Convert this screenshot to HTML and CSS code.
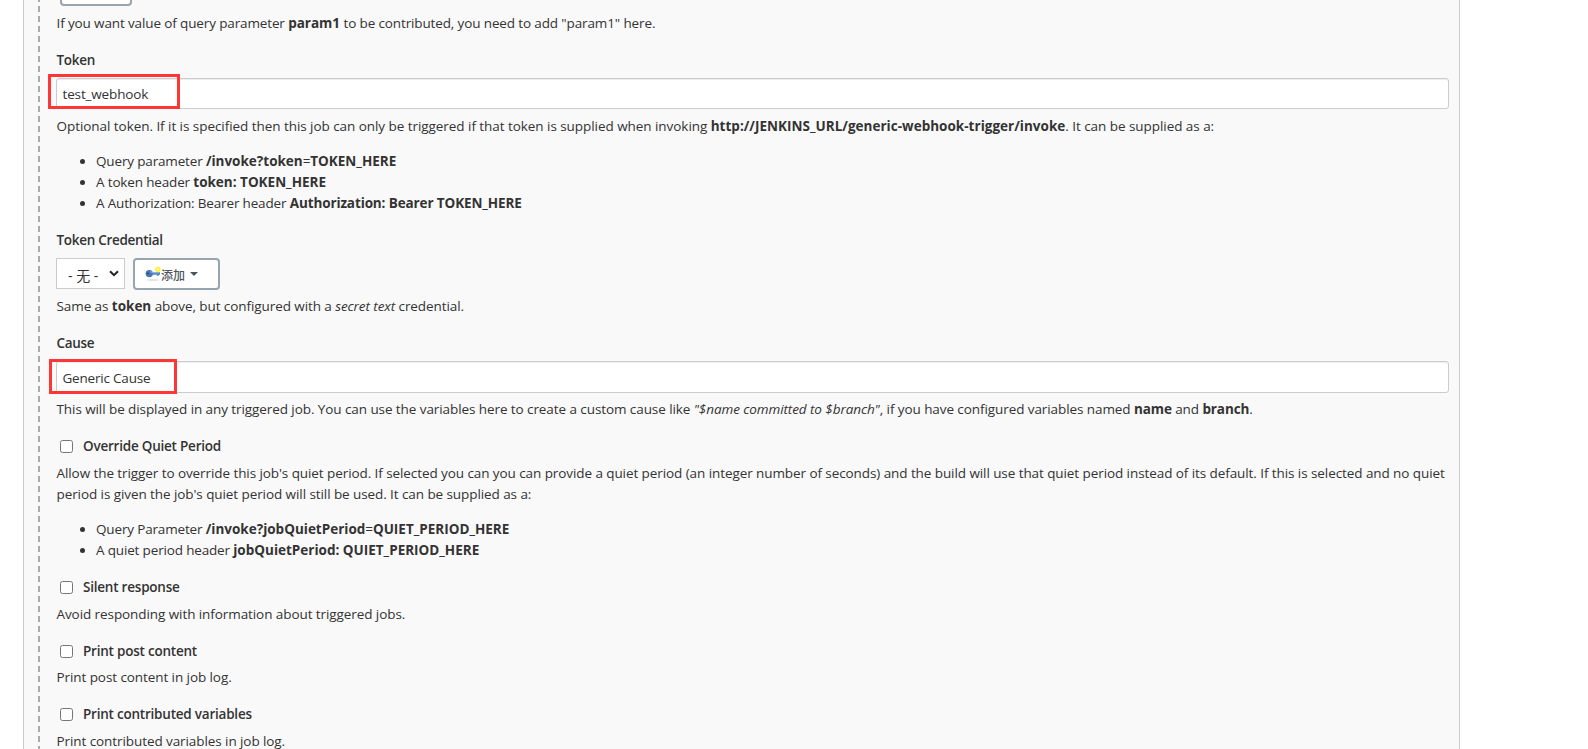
FILE: index.html
```html
<!DOCTYPE html>
<html lang="zh-CN">
<head>
    <meta charset="UTF-8">
    <meta name="viewport" content="width=device-width, initial-scale=1.0">
    <title>Generic Webhook Trigger</title>
    <link rel="stylesheet" href="styles.css">
</head>
<body>

    <form class="config-panel">
        <div class="nested">
            <button type="button" class="btn btn-cut" aria-label="add"></button>
            <div class="help help-param">If you want value of query parameter <b>param1</b> to be contributed, you need to add "param1" here.</div>

            <label class="title" for="token">Token</label>
            <div class="field">
                <input type="text" id="token" class="text-input" value="test_webhook">
                <span class="mark mark-token"></span>
            </div>
            <div class="help help-token">Optional token. If it is specified then this job can only be triggered if that token is supplied when invoking <b>http://JENKINS_URL/generic-webhook-trigger/invoke</b>. It can be supplied as a:</div>
            <ul>
                <li>Query parameter <b>/invoke?token</b>=<b>TOKEN_HERE</b></li>
                <li>A token header <b>token: TOKEN_HERE</b></li>
                <li>A Authorization: Bearer header <b class="tight">Authorization: Bearer TOKEN_HERE</b></li>
            </ul>

            <label class="title">Token Credential</label>
            <div class="credential-row">
                <div class="select">
                    <span>- 无 -</span>
                    <svg width="10" height="7" viewBox="0 0 10 7"><path d="M1 1.2L5 5.2L9 1.2" fill="none" stroke="#222" stroke-width="2"/></svg>
                </div>
                <button type="button" class="btn btn-add">
                    <svg class="key" width="16" height="16" viewBox="0 0 16 16">
                        <ellipse cx="8" cy="14" rx="6" ry="1" fill="#e4e4e4"/>
                        <path d="M7 6.2h8v2.6h-1.2v1h-2v-1H7z" fill="#5583bd"/>
                        <circle cx="4.3" cy="7.6" r="3.7" fill="#4a77b4"/>
                        <circle cx="3" cy="7.4" r="1" fill="#24466f"/>
                        <path d="M5 5.6l3 1.2h6" fill="none" stroke="#9bbbe0" stroke-width=".8"/>
                        <circle cx="12.8" cy="3.3" r="2.8" fill="#fff33d"/>
                        <circle cx="12.8" cy="3.3" r="1" fill="#fffbc0"/>
                    </svg>
                    <span>添加</span>
                    <svg class="caret" width="8" height="4" viewBox="0 0 8 4"><path d="M0 0h8L4 4z" fill="#4d545d"/></svg>
                </button>
            </div>
            <div class="help">Same as <b>token</b> above, but configured with a <i>secret text</i> credential.</div>

            <label class="title" for="cause">Cause</label>
            <div class="field field-cause">
                <input type="text" id="cause" class="text-input tall" value="Generic Cause">
                <span class="mark mark-cause"></span>
            </div>
            <div class="help">This will be displayed in any triggered job. You can use the variables here to create a custom cause like <i>"$name committed to $branch"</i>, if you have configured variables named <b class="tight">name</b> and <b class="tight">branch</b>.</div>

            <label class="check"><input type="checkbox">Override Quiet Period</label>
            <div class="help">Allow the trigger to override this job's quiet period. If selected you can you can provide a quiet period (an integer number of seconds) and the build will use that quiet period instead of its default. If this is selected and no quiet<br>period is given the job's quiet period will still be used. It can be supplied as a:</div>
            <ul>
                <li>Query Parameter <b>/invoke?jobQuietPeriod</b>=<b>QUIET_PERIOD_HERE</b></li>
                <li>A quiet period header <b>jobQuietPeriod: QUIET_PERIOD_HERE</b></li>
            </ul>

            <label class="check"><input type="checkbox">Silent response</label>
            <div class="help">Avoid responding with information about triggered jobs.</div>

            <label class="check check-post"><input type="checkbox">Print post content</label>
            <div class="help">Print post content in job log.</div>

            <label class="check"><input type="checkbox">Print contributed variables</label>
            <div class="help">Print contributed variables in job log.</div>
        </div>
    </form>

</body>
</html>
```

FILE: styles.css
```css
* {
    box-sizing: border-box;
}
body {
    margin: 0;
    height: 749px;
    overflow: hidden;
    background: #fff;
    color: #333;
    font-family: "Open Sans", "Noto Sans CJK SC", sans-serif;
    font-size: 13.5px;
    line-height: 21px;
}
.config-panel {
    margin-left: 23px;
    width: 1437px;
    height: 749px;
    padding-left: 14px;
    overflow: hidden;
    background: #f9f9f9;
    border: solid #ccc;
    border-width: 0 1px;
}
.nested {
    height: 790px;
    padding: 0 10px 0 18px;
    background: repeating-linear-gradient(#aaa 0 6px, transparent 6px 10px) 0 2px / 2px 100% no-repeat;
}
.help {
    padding-left: 0.5px;
    white-space: nowrap;
    letter-spacing: -0.08px;
}
.help-param {
    letter-spacing: -0.13px;
}
.help-token {
    letter-spacing: -0.053px;
}
b {
    letter-spacing: 0;
}
.help-token b {
    letter-spacing: 0.02px;
}
.tight {
    letter-spacing: -0.12px;
}
.title {
    display: block;
    margin: 16px 0 7px;
    padding-left: 0.5px;
    font-weight: 600;
    letter-spacing: -0.3px;
}
.field {
    position: relative;
    margin-bottom: 7px;
}
.field-cause {
    margin-bottom: 6px;
}
.text-input {
    display: block;
    width: 1393px;
    height: 31px;
    padding: 0 5.5px;
    border: 1px solid #ccc;
    border-radius: 3px;
    background: #fff;
    box-shadow: inset 0 1px 1px rgba(0, 0, 0, 0.075);
    color: #333;
    font: inherit;
    letter-spacing: -0.15px;
}
.tall {
    height: 32px;
    padding-top: 2px;
    letter-spacing: -0.2px;
}
.mark {
    position: absolute;
    border: 3px solid #ff3636;
}
.mark-token {
    left: -8px;
    top: -4px;
    width: 132px;
    height: 35px;
}
.mark-cause {
    left: -7px;
    top: -2px;
    width: 128px;
    height: 35px;
}
ul {
    margin: 14px 0 16px;
    padding-left: 40px;
    letter-spacing: -0.16px;
}
.credential-row {
    display: flex;
    gap: 8px;
    height: 32px;
    margin-bottom: 6px;
}
.select {
    display: flex;
    align-items: center;
    justify-content: space-between;
    width: 69px;
    height: 31px;
    padding: 0 5px 0 11px;
    border: 1px solid #ccc;
    background: #fff;
    font-size: 14px;
    white-space: nowrap;
}
.select span {
    padding-top: 4px;
}
.select svg {
    margin-bottom: 1px;
}
.btn {
    border: 2px solid #98a5af;
    border-radius: 4px;
    background: #fff;
}
.btn-cut {
    display: block;
    width: 72px;
    height: 32px;
    margin: -26px 0 7px 4px;
}
.btn-add {
    display: flex;
    align-items: center;
    width: 87px;
    height: 32px;
    padding: 0 0 0 10px;
    color: #4d545d;
    font: 500 12px "Noto Sans CJK SC", sans-serif;
}
.caret {
    margin-left: 5px;
}
.check {
    display: flex;
    align-items: center;
    height: 21px;
    margin: 16px 0 6px;
    font-weight: 600;
    letter-spacing: -0.22px;
}
.check input {
    width: 13px;
    height: 13px;
    margin: 0 10px 0 4px;
}
.check-post {
    margin-bottom: 5px;
}
```
